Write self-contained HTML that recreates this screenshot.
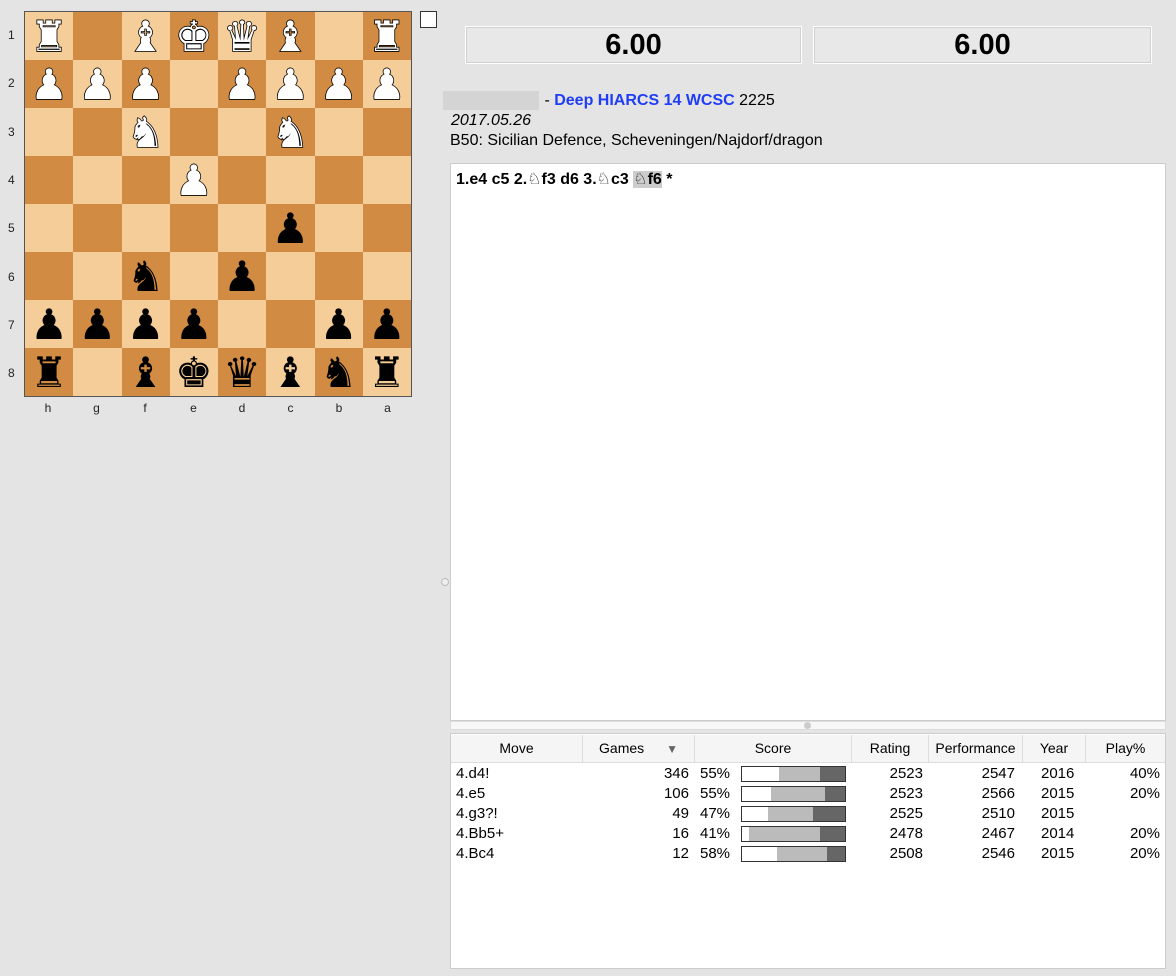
<!DOCTYPE html>
<html><head><meta charset="utf-8"><style>
*{margin:0;padding:0;box-sizing:border-box}
body{width:1176px;height:976px;background:#e4e4e4;font-family:"Liberation Sans",sans-serif;position:relative;overflow:hidden}
.a{position:absolute}
#board{left:24px;top:11px;width:388px;height:386px;border:1px solid #555;display:grid;grid-template-columns:repeat(8,1fr);grid-template-rows:repeat(8,1fr)}
.sq{position:relative}
.l{background:#f4cd98}
.d{background:#d18b42}
.p{position:absolute;left:0;top:2px;width:100%;height:100%;text-align:center;font-family:"DejaVu Sans",sans-serif;font-size:42px;line-height:46px}
.w1{color:#fff;-webkit-text-stroke:1.6px #000;paint-order:stroke fill}
.bk{color:#000}
.rk{left:8px;font-size:12px;color:#222;width:10px}
.fl{top:401px;font-size:12px;color:#222;width:48px;text-align:center}
.box{top:26px;height:38px;background:#e8e8e8;border:1px solid #fff;box-shadow:inset 0 0 0 1px #d0d0d0;text-align:center;font-weight:bold;font-size:29px;line-height:37px}
.hd{top:735px;height:28px;background:#f5f5f5;border-bottom:1px solid #ddd;font-size:14px;line-height:27px}
.hc{position:absolute;top:0;text-align:center;border-right:1px solid #ddd;height:28px}
.row{position:absolute;left:456px;height:20px;font-size:15px;line-height:20px;width:704px}
.row span{position:absolute}
.bar{position:absolute;left:285px;top:2px;width:105px;height:16px;border:1px solid #333;background:#fff}
.bar i{position:absolute;top:0;height:14px}
</style></head><body>
<div class="a" id="board"></div>
<div class="a" style="left:420px;top:11px;width:17px;height:17px;background:#fff;border:1px solid #333"></div>
<div class="a box" style="left:465px;width:337px">6.00</div>
<div class="a box" style="left:813px;width:339px">6.00</div>
<div class="a" style="left:443px;top:91px;width:96px;height:19px;background:#d4d4d4"></div>
<div class="a" style="left:540px;top:91px;font-size:16px;line-height:20px">&nbsp;- <b style="color:#1f3df5">Deep HIARCS 14 WCSC</b> 2225</div>
<div class="a" style="left:451px;top:111px;font-size:16px;font-style:italic;line-height:20px">2017.05.26</div>
<div class="a" style="left:450px;top:131px;font-size:16px;line-height:20px">B50: Sicilian Defence, Scheveningen/Najdorf/dragon</div>
<div class="a" style="left:450px;top:163px;width:716px;height:558px;background:#fff;border:1px solid #ccc"></div>
<div class="a" style="left:456px;top:169px;font-size:16px;font-weight:bold;line-height:20px">1.e4 c5 2.<span style="font-weight:normal;font-family:'DejaVu Sans'">♘</span>f3 d6 3.<span style="font-weight:normal;font-family:'DejaVu Sans'">♘</span>c3 <span style="background:#ccc"><span style="font-weight:normal;font-family:'DejaVu Sans'">♘</span>f6</span> *</div>
<div class="a" style="left:450px;top:721px;width:716px;height:9px;background:#f7f7f7;border:1px solid #ddd"></div>
<div class="a" style="left:804px;top:722px;width:7px;height:7px;border-radius:50%;background:#ccc"></div>
<div class="a" style="left:441px;top:578px;width:8px;height:8px;border-radius:50%;background:#eee;border:1px solid #bbb"></div>
<div class="a" style="left:450px;top:733px;width:716px;height:236px;background:#fff;border:1px solid #ccc"></div>
<div class="a hd" style="left:451px;width:714px">
<div class="hc" style="left:0;width:132px">Move</div>
<div class="hc" style="left:132px;width:112px">Games <span style="color:#666;font-size:12px;margin-left:18px">▼</span></div>
<div class="hc" style="left:244px;width:157px">Score</div>
<div class="hc" style="left:401px;width:77px">Rating</div>
<div class="hc" style="left:478px;width:94px">Performance</div>
<div class="hc" style="left:572px;width:63px">Year</div>
<div class="hc" style="left:635px;width:79px;border:none">Play%</div>
</div>
<div id="rows"></div>
<script>
const L=[["R","","B","K","Q","B","","R"],["P","P","P","","P","P","P","P"],["","","N","","","N","",""],["","","","P","","","",""],["","","","","","p","",""],["","","n","","p","","",""],["p","p","p","p","","","p","p"],["r","","b","k","q","b","n","r"]];
const F={K:"♚",Q:"♛",R:"♜",B:"♝",N:"♞",P:"♟"};
let h="";
for(let r=0;r<8;r++)for(let c=0;c<8;c++){const x=L[r][c];h+='<div class="sq '+((r+c)%2?'d':'l')+'">';
if(x){const u=x.toUpperCase();h+='<div class="p '+(x===u?'w1':'bk')+'">'+F[u]+'</div>';}
h+='</div>';}
document.getElementById('board').innerHTML=h;
let s="";for(let r=0;r<8;r++)s+='<div class="a rk" style="top:'+(28+r*48.3)+'px">'+(r+1)+'</div>';
"hgfedcba".split("").forEach((f,i)=>s+='<div class="a fl" style="left:'+(24+i*48.5)+'px">'+f+'</div>');
const R=[["4.d4!",346,"55%",37,78,2523,2547,2016,"40%"],["4.e5",106,"55%",29,83,2523,2566,2015,"20%"],["4.g3?!",49,"47%",26,71,2525,2510,2015,""],["4.Bb5+",16,"41%",7,78,2478,2467,2014,"20%"],["4.Bc4",12,"58%",35,85,2508,2546,2015,"20%"]];
R.forEach((q,i)=>{s+='<div class="row" style="top:'+(764+i*20)+'px"><span style="left:0">'+q[0]+'</span><span style="right:471px">'+q[1]+'</span><span style="left:244px">'+q[2]+'</span><div class="bar"><i style="left:'+q[3]+'px;width:'+(q[4]-q[3])+'px;background:#bbb"></i><i style="left:'+q[4]+'px;right:0;background:#666"></i></div><span style="right:237px">'+q[5]+'</span><span style="right:145px">'+q[6]+'</span><span style="left:585px">'+q[7]+'</span><span style="right:0">'+q[8]+'</span></div>';});
document.getElementById('rows').innerHTML=s;
</script>
</body></html>
